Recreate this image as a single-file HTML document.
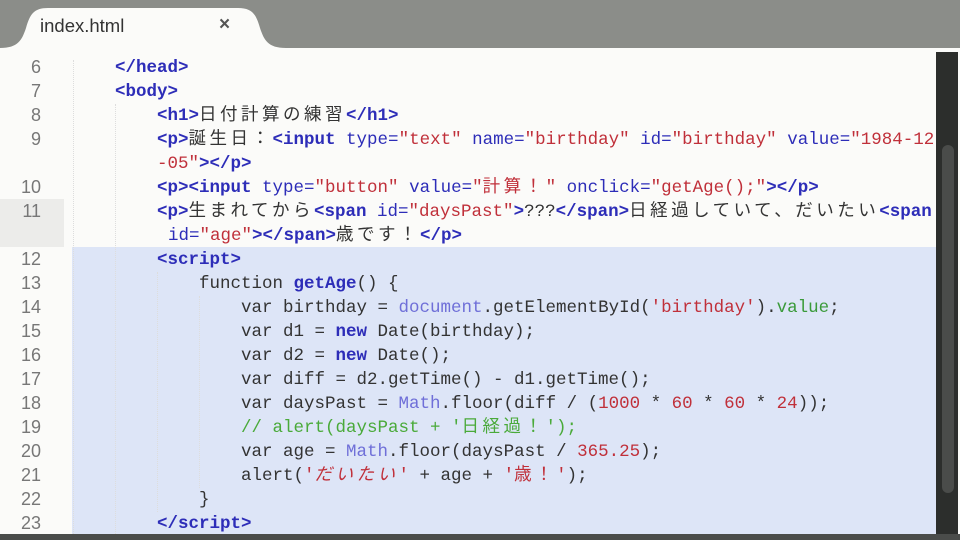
<!DOCTYPE html>
<html><head><meta charset="utf-8"><style>
body{margin:0;width:960px;height:540px;overflow:hidden;background:#8b8d89;position:relative;font-family:"Liberation Mono","Noto Sans CJK JP",monospace;}
#ed{position:absolute;left:0;top:48px;width:960px;height:486px;background:#fbfbf9;}
#sel{position:absolute;left:72px;top:247px;width:864px;height:287px;background:#dde5f7;}
#g11{position:absolute;left:0;top:199px;width:64px;height:48px;background:#ececea;}
.n{position:absolute;left:0;width:41px;text-align:right;font-size:18px;color:#777;font-family:"Liberation Sans",sans-serif;}
.l{position:absolute;font-size:17.5px;white-space:pre;color:#333;line-height:24px;}
.j{letter-spacing:3.5px;font-family:"Liberation Mono","Noto Sans CJK JP",sans-serif;}
.t{color:#2d2db8;}
.s{color:#c0303a;}
.b{color:#2d2db8;font-weight:bold;}
.p{color:#6f6fd8;}
.c{color:#4aaa3a;}
.gv{color:#3a9a3a;}
.guide{position:absolute;width:0;border-left:1px dotted #ddd;}
#sb{position:absolute;left:936px;top:52px;width:22px;height:482px;background:#2c2e2c;}
#th{position:absolute;left:942px;top:145px;width:12px;height:348px;background:#4a4c4a;border-radius:6px;}
#bot{position:absolute;left:0;top:534px;width:960px;height:6px;background:#4a4c4a;}
</style></head><body>
<svg style="position:absolute;left:0;top:0" width="300" height="50"><path d="M0 48 C18 48 22 40 26 28 C30 14 34 8 48 8 L238 8 C252 8 256 14 260 28 C264 40 268 48 286 48 Z" fill="#fbfbf9"/></svg>
<div style="position:absolute;left:40px;top:15px;font-family:'Liberation Sans',sans-serif;font-size:18.5px;color:#333">index.html</div>
<div style="position:absolute;left:219px;top:14px;font-family:'Liberation Sans',sans-serif;font-size:19px;color:#555;font-weight:bold">×</div>
<div id="ed"></div>
<div id="g11"></div>
<div id="sel"></div>
<div class="guide" style="left:73px;top:60px;height:474px"></div>
<div class="guide" style="left:115px;top:104px;height:430px"></div>
<div class="guide" style="left:157px;top:272px;height:240px"></div>
<div class="guide" style="left:199px;top:296px;height:192px"></div>
<div class="n" style="top:57px">6</div>
<div class="n" style="top:81px">7</div>
<div class="n" style="top:105px">8</div>
<div class="n" style="top:129px">9</div>
<div class="n" style="top:177px">10</div>
<div class="n" style="top:201px">11</div>
<div class="n" style="top:249px">12</div>
<div class="n" style="top:273px">13</div>
<div class="n" style="top:297px">14</div>
<div class="n" style="top:321px">15</div>
<div class="n" style="top:345px">16</div>
<div class="n" style="top:369px">17</div>
<div class="n" style="top:393px">18</div>
<div class="n" style="top:417px">19</div>
<div class="n" style="top:441px">20</div>
<div class="n" style="top:465px">21</div>
<div class="n" style="top:489px">22</div>
<div class="n" style="top:513px">23</div>

<div class="l" style="left:115px;top:56px"><span class="b">&lt;/head&gt;</span></div>
<div class="l" style="left:115px;top:80px"><span class="b">&lt;body&gt;</span></div>
<div class="l" style="left:157px;top:104px"><span class="b">&lt;h1&gt;</span><span class="j">日付計算の練習</span><span class="b">&lt;/h1&gt;</span></div>
<div class="l" style="left:157px;top:128px"><span class="b">&lt;p&gt;</span><span class="j">誕生日：</span><span class="b">&lt;input</span> <span class="t">type=</span><span class="s">"text"</span> <span class="t">name=</span><span class="s">"birthday"</span> <span class="t">id=</span><span class="s">"birthday"</span> <span class="t">value=</span><span class="s">"1984-12</span></div>
<div class="l" style="left:157px;top:152px"><span class="s">-05"</span><span class="b">&gt;&lt;/p&gt;</span></div>
<div class="l" style="left:157px;top:176px"><span class="b">&lt;p&gt;&lt;input</span> <span class="t">type=</span><span class="s">"button"</span> <span class="t">value=</span><span class="s">"<span class="j">計算！</span>"</span> <span class="t">onclick=</span><span class="s">"getAge();"</span><span class="b">&gt;&lt;/p&gt;</span></div>
<div class="l" style="left:157px;top:200px"><span class="b">&lt;p&gt;</span><span class="j">生まれてから</span><span class="b">&lt;span</span> <span class="t">id=</span><span class="s">"daysPast"</span><span class="b">&gt;</span>???<span class="b">&lt;/span&gt;</span><span class="j">日経過していて、だいたい</span><span class="b">&lt;span</span></div>
<div class="l" style="left:168px;top:224px"><span class="t">id=</span><span class="s">"age"</span><span class="b">&gt;&lt;/span&gt;</span><span class="j">歳です！</span><span class="b">&lt;/p&gt;</span></div>
<div class="l" style="left:157px;top:248px"><span class="b">&lt;script&gt;</span></div>
<div class="l" style="left:199px;top:272px">function <span class="b">getAge</span>() {</div>
<div class="l" style="left:241px;top:296px">var birthday = <span class="p">document</span>.getElementById(<span class="s">'birthday'</span>).<span class="gv">value</span>;</div>
<div class="l" style="left:241px;top:320px">var d1 = <span class="b">new</span> Date(birthday);</div>
<div class="l" style="left:241px;top:344px">var d2 = <span class="b">new</span> Date();</div>
<div class="l" style="left:241px;top:368px">var diff = d2.getTime() - d1.getTime();</div>
<div class="l" style="left:241px;top:392px">var daysPast = <span class="p">Math</span>.floor(diff / (<span class="s">1000</span> * <span class="s">60</span> * <span class="s">60</span> * <span class="s">24</span>));</div>
<div class="l c" style="left:241px;top:416px">// alert(daysPast + '<span class="j">日経過！</span>');</div>
<div class="l" style="left:241px;top:440px">var age = <span class="p">Math</span>.floor(daysPast / <span class="s">365.25</span>);</div>
<div class="l" style="left:241px;top:464px">alert(<span class="s">'<span class="j" style="font-style:italic">だいたい</span>'</span> + age + <span class="s">'<span class="j">歳！</span>'</span>);</div>
<div class="l" style="left:199px;top:488px">}</div>
<div class="l" style="left:157px;top:512px"><span class="b">&lt;/script&gt;</span></div>
<div id="sb"></div><div id="th"></div>
<div id="bot"></div>
</body></html>
